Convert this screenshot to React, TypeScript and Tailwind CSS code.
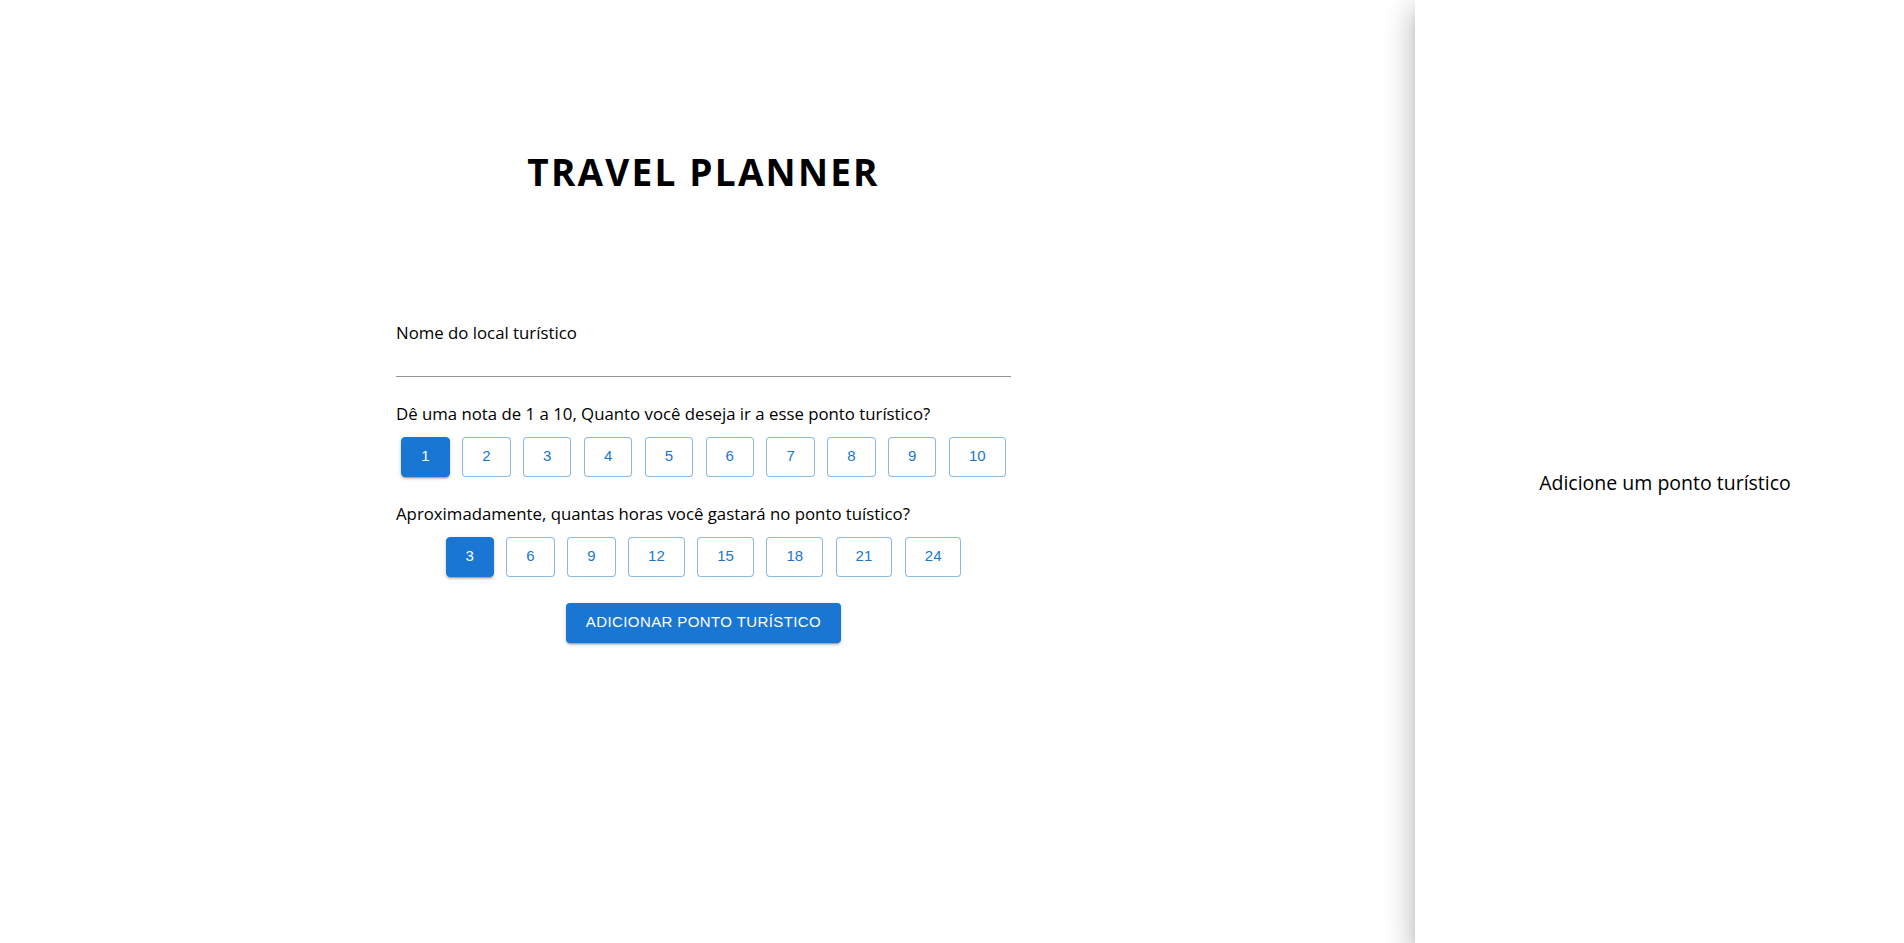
import { useState } from "react";

const ratings = [1, 2, 3, 4, 5, 6, 7, 8, 9, 10];
const hours = [3, 6, 9, 12, 15, 18, 21, 24];

const Choice = ({ value, selected, onClick }: any) => (
  <button
    onClick={onClick}
    className={
      selected
        ? "h-10 px-[19px] rounded-[4px] border border-[#1976d2] bg-[#1976d2] text-white text-[15px] shadow-[0px_3px_1px_-2px_rgba(0,0,0,0.2),0px_2px_2px_0px_rgba(0,0,0,0.14),0px_1px_5px_0px_rgba(0,0,0,0.12)]"
        : "h-10 px-[19px] rounded-[4px] border border-[#1976d280] bg-white text-[#1976d2] text-[15px]"
    }
    style={{ fontFamily: "'Liberation Sans', Arial, sans-serif" }}
  >
    {value}
  </button>
);

export default function App() {
  const [rating, setRating] = useState(1);
  const [hour, setHour] = useState(3);
  const [name, setName] = useState("");

  return (
    <div className="flex h-screen w-full bg-white text-black" style={{ fontFamily: "'Open Sans', sans-serif" }}>
      {/* Form */}
      <div className="flex-1 flex flex-col items-center pr-[8px]">
        <h1 className="mt-[148px] text-[37px] font-bold leading-[48px] tracking-[2.2px]">TRAVEL PLANNER</h1>

        <div className="mt-[125px] w-[615px] flex flex-col">
          <label className="text-[16.8px] leading-6">Nome do local turístico</label>
          <input
            value={name}
            onChange={(e) => setName(e.target.value)}
            className="h-8 border-b border-[#949494] outline-none text-[16px]"
          />

          <p className="mt-[24.5px] text-[16.8px] leading-6">Dê uma nota de 1 a 10, Quanto você deseja ir a esse ponto turístico?</p>
          <div className="mt-[11px] flex justify-center gap-[12.5px]">
            {ratings.map((r) => (
              <Choice key={r} value={r} selected={rating === r} onClick={() => setRating(r)} />
            ))}
          </div>

          <p className="mt-[25px] text-[16.8px] leading-6">Aproximadamente, quantas horas você gastará no ponto tuístico?</p>
          <div className="mt-[11px] flex justify-center gap-[12.5px]">
            {hours.map((h) => (
              <Choice key={h} value={h} selected={hour === h} onClick={() => setHour(h)} />
            ))}
          </div>

          <div className="mt-[26px] flex justify-center">
            <button
              className="h-10 px-5 rounded-[4px] bg-[#1976d2] text-white text-[15px] uppercase tracking-[0.4px] shadow-[0px_3px_1px_-2px_rgba(0,0,0,0.2),0px_2px_2px_0px_rgba(0,0,0,0.14),0px_1px_5px_0px_rgba(0,0,0,0.12)]"
              style={{ fontFamily: "'Liberation Sans', Arial, sans-serif" }}
            >
              Adicionar ponto turístico
            </button>
          </div>
        </div>
      </div>

      {/* Sidebar */}
      <div className="w-[489px] h-full flex items-center justify-center pt-[22px] pl-[11px] shadow-[0px_8px_10px_-5px_rgba(0,0,0,0.2),0px_16px_24px_2px_rgba(0,0,0,0.14),0px_6px_30px_5px_rgba(0,0,0,0.12)]">
        <p className="text-[19.5px]">Adicione um ponto turístico</p>
      </div>
    </div>
  );
}
